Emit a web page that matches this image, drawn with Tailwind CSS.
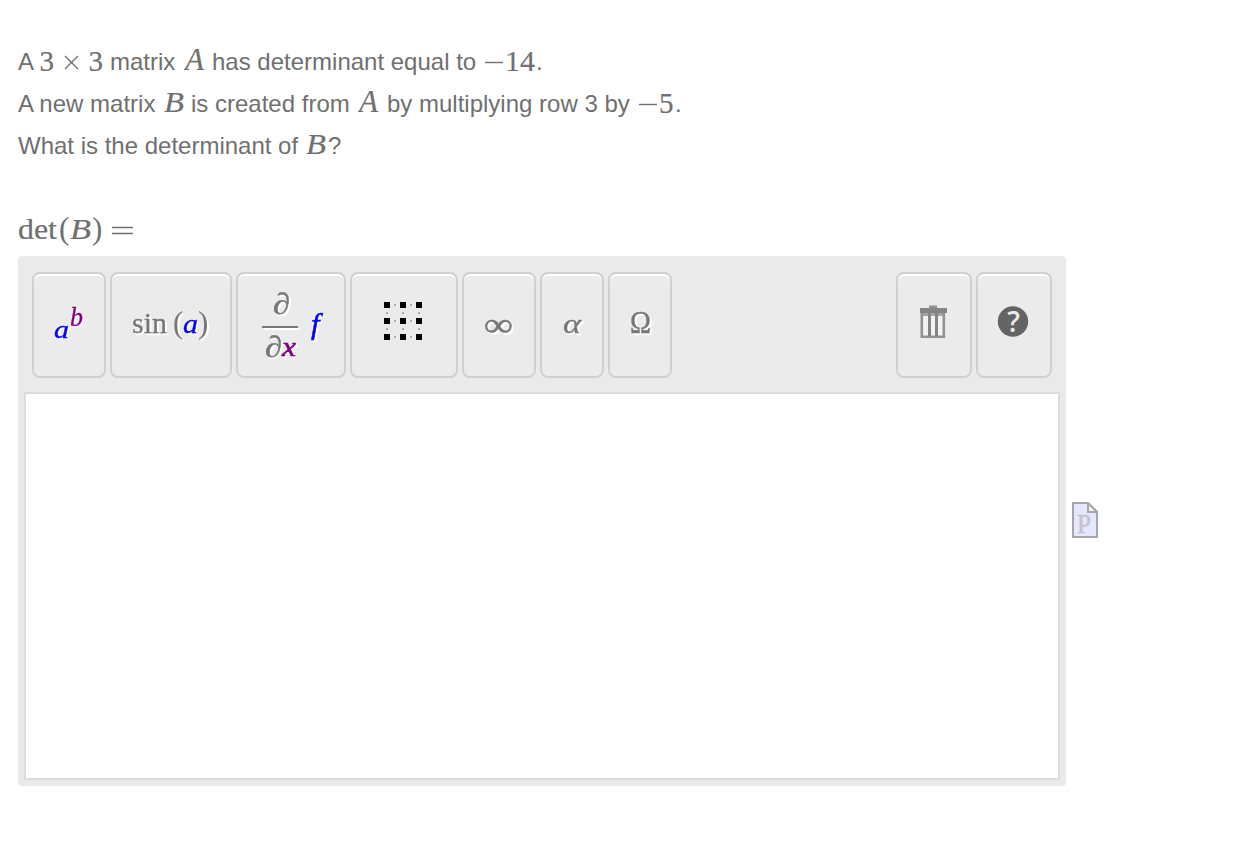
<!DOCTYPE html>
<html lang="en">
<head>
    <meta charset="UTF-8">
    <meta name="viewport" content="width=device-width, initial-scale=1.0">
    <script src="https://cdn.jsdelivr.net/npm/@tailwindcss/browser@4"></script>
    <title>Determinant</title>
</head>
<body class="bg-white text-[#707070] font-['Liberation_Sans',Arial,sans-serif]">
    <div class="pl-[18px] pt-10 text-2xl/[42px] whitespace-nowrap">
        <div class="flex h-[42px]">
            <span class="w-[22px] pt-px">A</span>
            <svg class="w-[70px] h-[42px] font-['Liberation_Serif',serif]" fill="currentColor" font-size="29" stroke="currentColor" stroke-width=".2">
                <text x="-.5" y="30.5">3</text>
                <path d="M25 16L38 29M38 16L25 29" stroke-width="1.4" />
                <text x="48.5" y="30.5">3</text>
            </svg>
            <span class="w-[74px] pt-px">matrix</span>
            <svg class="w-[28px] h-[42px] font-['Liberation_Serif',serif]" fill="currentColor" font-size="31" font-style="italic" stroke="currentColor" stroke-width=".2">
                <text x="1" y="30" textLength="19" lengthAdjust="spacingAndGlyphs">A</text>
            </svg>
            <span class="w-[273px] pt-px">has determinant equal to</span>
            <svg class="w-[51px] h-[42px] font-['Liberation_Serif',serif]" fill="currentColor" font-size="29" stroke="currentColor" stroke-width=".2">
                <path d="M0 22.5H18" stroke-width="1.4" />
                <text x="20" y="30.5" textLength="30" lengthAdjust="spacingAndGlyphs">14</text>
            </svg>
            <span class="pt-px">.</span>
        </div>
        <div class="flex h-[42px]">
            <span class="w-[145px] pt-px">A new matrix</span>
            <svg class="w-[28px] h-[42px] font-['Liberation_Serif',serif]" fill="currentColor" font-size="30" font-style="italic" stroke="currentColor" stroke-width=".2">
                <text x="1" y="30" textLength="20" lengthAdjust="spacingAndGlyphs">B</text>
            </svg>
            <span class="w-[167px] pt-px">is created from</span>
            <svg class="w-[29px] h-[42px] font-['Liberation_Serif',serif]" fill="currentColor" font-size="31" font-style="italic" stroke="currentColor" stroke-width=".2">
                <text x="1" y="30" textLength="19" lengthAdjust="spacingAndGlyphs">A</text>
            </svg>
            <span class="w-[251px] pt-px">by multiplying row 3 by</span>
            <svg class="w-[37px] h-[42px] font-['Liberation_Serif',serif]" fill="currentColor" font-size="29" stroke="currentColor" stroke-width=".2">
                <path d="M1 22.5H19" stroke-width="1.4" />
                <text x="21" y="30.5">5</text>
            </svg>
            <span class="pt-px">.</span>
        </div>
        <div class="flex h-[42px]">
            <span class="w-[287px] pt-px">What is the determinant of</span>
            <svg class="w-[23px] h-[42px] font-['Liberation_Serif',serif]" fill="currentColor" font-size="30" font-style="italic" stroke="currentColor" stroke-width=".2">
                <text x="1" y="30" textLength="20" lengthAdjust="spacingAndGlyphs">B</text>
            </svg>
            <span class="pt-px">?</span>
        </div>
        <svg class="mt-[42px] w-[120px] h-12 font-['Liberation_Serif',serif]" fill="currentColor" font-size="29" stroke="currentColor" stroke-width=".2">
            <text x="0" y="30.5" textLength="39" lengthAdjust="spacingAndGlyphs">det</text>
            <text x="41" y="30.5" font-size="31" stroke="none">(</text>
            <text x="52" y="30.5" font-style="italic" textLength="21" lengthAdjust="spacingAndGlyphs">B</text>
            <text x="74" y="30.5" font-size="31" stroke="none">)</text>
            <path d="M94 19.5H115M94 25.5H115" stroke-width="1.5" />
        </svg>
    </div>

    <div class="flex items-center pl-[18px]">
        <div class="w-[1048px] h-[530px] shrink-0 rounded bg-[#eaeaea] px-1.5 pt-4">
            <!-- toolbar -->
            <div class="flex gap-1 px-2 font-['Liberation_Serif',serif]">
                <button class="w-[74px] h-[106px] rounded-lg border-2 border-[#d0d0d0] bg-[#ebebeb] shadow-[inset_0_2px_0_#fff]">
                    <svg class="w-[70px] h-[102px] drop-shadow-[2px_2px_0_#fff]" font-size="26" font-style="italic" stroke-width=".3">
                        <text x="20" y="64" fill="#00f" stroke="#00f" textLength="15" lengthAdjust="spacingAndGlyphs">a</text>
                        <text x="36" y="52" fill="purple" stroke="purple" font-size="28" textLength="13" lengthAdjust="spacingAndGlyphs">b</text>
                    </svg>
                </button>
                <button class="w-[122px] h-[106px] rounded-lg border-2 border-[#d0d0d0] bg-[#ebebeb] shadow-[inset_0_2px_0_#fff]">
                    <svg class="w-[118px] h-[102px] drop-shadow-[2px_2px_0_#fff]" fill="#777" font-size="29">
                        <text x="20" y="58.5" stroke="#777" stroke-width=".3" textLength="35" lengthAdjust="spacingAndGlyphs">sin</text>
                        <text x="61" y="58.5" font-size="31">(</text>
                        <text x="71" y="58.5" font-size="27" font-style="italic" fill="#00f" stroke="#00f" stroke-width=".3" textLength="15" lengthAdjust="spacingAndGlyphs">a</text>
                        <text x="86" y="58.5" font-size="31">)</text>
                    </svg>
                </button>
                <button class="w-[110px] h-[106px] rounded-lg border-2 border-[#d0d0d0] bg-[#ebebeb] shadow-[inset_0_2px_0_#fff]">
                    <svg class="w-[106px] h-[102px] drop-shadow-[2px_2px_0_#fff]" fill="#777" font-size="30" stroke="#777" stroke-width=".5">
                        <text x="35" y="40" textLength="17" lengthAdjust="spacingAndGlyphs">∂</text>
                        <path d="M24 53H60" stroke-width="2" />
                        <text x="27" y="82.5" textLength="17" lengthAdjust="spacingAndGlyphs">∂</text>
                        <text x="44" y="82" font-size="28" font-style="italic" fill="purple" stroke="purple" stroke-width=".6" textLength="14" lengthAdjust="spacingAndGlyphs">x</text>
                        <text x="73" y="60" font-size="29" font-style="italic" fill="#00f" stroke="#00f" textLength="8.5" lengthAdjust="spacingAndGlyphs">f</text>
                    </svg>
                </button>
                <button class="w-[108px] h-[106px] rounded-lg border-2 border-[#d0d0d0] bg-[#ebebeb] shadow-[inset_0_2px_0_#fff]">
                    <svg class="w-[104px] h-[102px]">
                        <path d="M32 31H70M32 47H70M32 63H70" stroke="#000" stroke-width="6" stroke-dasharray="6 10" />
                        <path d="M42 31H60M42 47H60M42 63H60" stroke="#aaa" stroke-width="2" stroke-dasharray="2 14" />
                        <path d="M35 38V56M51 38V56M67 38V56" stroke="#aaa" stroke-width="2" stroke-dasharray="2 14" />
                    </svg>
                </button>
                <button class="w-[74px] h-[106px] rounded-lg border-2 border-[#d0d0d0] bg-[#ebebeb] shadow-[inset_0_2px_0_#fff]">
                    <svg class="w-[70px] h-[102px] drop-shadow-[2px_2px_0_#fff]" fill="#777" font-size="34" stroke="#777" stroke-width=".4">
                        <text x="20" y="62" textLength="29" lengthAdjust="spacingAndGlyphs">∞</text>
                    </svg>
                </button>
                <button class="w-16 h-[106px] rounded-lg border-2 border-[#d0d0d0] bg-[#ebebeb] shadow-[inset_0_2px_0_#fff]">
                    <svg class="w-[60px] h-[102px] drop-shadow-[2px_2px_0_#fff]" fill="#777" font-size="28" font-style="italic" stroke="#777" stroke-width=".3">
                        <text x="21" y="58.5" textLength="18" lengthAdjust="spacingAndGlyphs">α</text>
                    </svg>
                </button>
                <button class="w-16 h-[106px] rounded-lg border-2 border-[#d0d0d0] bg-[#ebebeb] shadow-[inset_0_2px_0_#fff]">
                    <svg class="w-[60px] h-[102px] drop-shadow-[2px_2px_0_#fff]" fill="#777" stroke="#777" stroke-width=".4" font-size="31">
                        <text x="20" y="58.5" textLength="21" lengthAdjust="spacingAndGlyphs">Ω</text>
                    </svg>
                </button>
                <button class="ml-auto w-[76px] h-[106px] rounded-lg border-2 border-[#d0d0d0] bg-[#ebebeb] shadow-[inset_0_2px_0_#fff]">
                    <svg class="w-[72px] h-[102px]" fill="none" stroke="#858587">
                        <path d="M24 41H46V62H24Z" fill="#f3f3f3" stroke="none" />
                        <path d="M31 33H39" stroke="#929292" stroke-width="3" />
                        <path d="M22 36.5H49" stroke-width="5" />
                        <path d="M24 40.5H46" stroke="#a5a5a5" stroke-width="3" />
                        <path d="M23.8 39V62.7H45.8V39" stroke="#929292" stroke-width="2.6" />
                        <path d="M31.5 39V62M38.5 39V62" stroke-width="3" />
                    </svg>
                </button>
                <button class="w-[76px] h-[106px] rounded-lg border-2 border-[#d0d0d0] bg-[#ebebeb] shadow-[inset_0_2px_0_#fff]">
                    <svg class="w-[72px] h-[102px] font-['Open_Sans',sans-serif]">
                        <circle cx="35" cy="47.5" r="15.2" fill="#636466" />
                        <text x="35.5" y="58" text-anchor="middle" font-size="28" font-weight="600" fill="#ebebeb">?</text>
                    </svg>
                </button>
            </div>
            <!-- answer area -->
            <div class="mt-3.5 h-[388px] border-2 border-[#dcdcdc] bg-white"></div>
        </div>
        <svg class="ml-1.5 w-[26px] h-9 -mt-0.5 font-['Liberation_Serif',serif]" fill="none">
            <path d="M1 1H16L25 10V35H1Z" fill="#e6e6ff" />
            <path d="M1 1H16L25 10V35H1Z" stroke="#a6a6a6" stroke-width="2" />
            <path d="M16 1V10H25Z" fill="#f5f5f5" stroke="#a6a6a6" stroke-width="2" />
            <text x="5" y="31" font-size="28" fill="#c3c3cc" stroke="#c3c3cc" stroke-width=".5" textLength="14" lengthAdjust="spacingAndGlyphs">P</text>
        </svg>
    </div>
</body>
</html>
